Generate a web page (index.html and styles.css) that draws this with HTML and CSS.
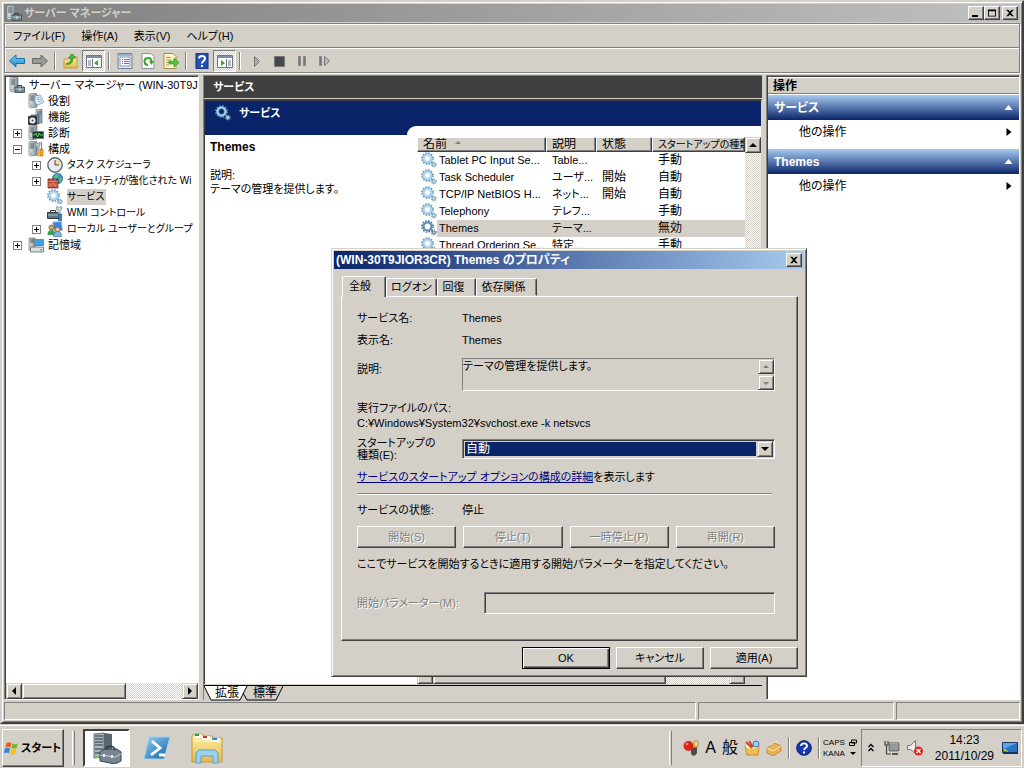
FILE: index.html
```html
<!DOCTYPE html>
<html lang="ja">
<head>
  <meta charset="UTF-8">
  <title>サーバー マネージャー</title>
  <link rel="stylesheet" href="styles.css">
</head>
<body>
  <!-- shared icons -->
  <svg class="sprite" aria-hidden="true">
    <defs>
      <linearGradient id="gTower" x1="0" x2="1"><stop offset="0" stop-color="#e4eaec"/><stop offset="1" stop-color="#7e8d94"/></linearGradient>
      <linearGradient id="gBlue" x1="0" y1="0" x2="0" y2="1"><stop offset="0" stop-color="#7fd3f7"/><stop offset="1" stop-color="#1583cf"/></linearGradient>
      <linearGradient id="gFolder" x1="0" y1="0" x2="0" y2="1"><stop offset="0" stop-color="#fff0a8"/><stop offset="1" stop-color="#e3b94c"/></linearGradient>
      <linearGradient id="gShell" x1="0" y1="0" x2="1" y2="1"><stop offset="0" stop-color="#8fd0f2"/><stop offset="1" stop-color="#0f5fa8"/></linearGradient>
      <symbol id="tower" viewBox="0 0 16 16">
        <path d="M1 1l6-1 2 1v13l-6 1-2-1z" fill="url(#gTower)" stroke="#6b7980" stroke-width=".7"/>
        <path d="M2 3h4M2 5h4M2 7h4" stroke="#4d5a61"/>
        <path d="M2 12h2v1H2z" fill="#4be01c"/>
      </symbol>
      <symbol id="server" viewBox="0 0 16 16">
        <use href="#tower"/>
        <path d="M6 10h9.500v5.500H6z" fill="#71848f" stroke="#3c4a53" stroke-width=".8"/>
        <path d="M8.500 10V8.500h4V10" fill="none" stroke="#333f48"/>
        <path d="M6.500 12h8.500" stroke="#b9c6ce"/><path d="M10 11.500h1.500v2H10z" fill="#e4eaee"/>
      </symbol>
      <symbol id="role" viewBox="0 0 16 16">
        <use href="#tower"/>
        <path d="M7 3l5-1 4 7-6 3-3-2z" fill="#e5f2fc" stroke="#6f93b5" stroke-width=".8"/>
        <path d="M8.500 5l3-1M9 7l4-1.500M10 9l4-1.500" stroke="#6d9cc9" stroke-width=".8"/>
      </symbol>
      <symbol id="feature" viewBox="0 0 16 16">
        <path d="M8 0h6v14H8z" fill="url(#gTower)" stroke="#6b7980" stroke-width=".7"/><path d="M9 3h4M9 5h4" stroke="#4d5a61"/>
        <path d="M3 6h8v9H3z" fill="#6c8aa3" stroke="#384d5e" stroke-width=".7"/>
        <path d="M.5 7.500h8v8h-8z" fill="#33393e" stroke="#16191b" stroke-width=".7"/>
        <circle cx="4.500" cy="11.500" r="3" fill="#e8edf0"/><circle cx="4.500" cy="11.500" r="1" fill="#444"/>
        <path d="M11 12h2v1h-2z" fill="#4be01c"/>
      </symbol>
      <symbol id="diag" viewBox="0 0 16 16">
        <use href="#tower"/>
        <path d="M4.500 6.500h11v7h-11z" fill="#183a26" stroke="#70777a"/>
        <path d="M5 10h2l1-2 1.500 4 1.500-4 1 2h3" fill="none" stroke="#5fe257" stroke-width=".9"/>
      </symbol>
      <symbol id="config" viewBox="0 0 16 16">
        <use href="#tower"/>
        <path d="M8 1l2 2 2-2v3l-1 2v9H9V6L7 4z" fill="#b7c2c9" stroke="#66747d" stroke-width=".6"/>
        <path d="M13.500 1v7" stroke="#7c8b95" stroke-width="1.200"/><path d="M12 8h3v7h-3z" fill="#f3a62c" stroke="#b36c0c" stroke-width=".6"/><path d="M9 10h2v5H9z" fill="#f3a62c"/>
      </symbol>
      <symbol id="clock" viewBox="0 0 16 16">
        <circle cx="8" cy="8" r="7.200" fill="#e9edf0" stroke="#5f6a70" stroke-width="1.400"/>
        <path d="M8 8V2.800A5.200 5.200 0 0 1 13.200 8z" fill="#f7d894"/>
        <path d="M8 3v5h4" fill="none" stroke="#4b4b4b"/>
      </symbol>
      <symbol id="firewall" viewBox="0 0 16 16">
        <circle cx="10.500" cy="5.500" r="5.200" fill="#2e8be0" stroke="#1a5ca0" stroke-width=".6"/>
        <path d="M8 2l3-1 1 2-2 2-2 1-1-2zM12 5l3 0-1 4-2-1z" fill="#5fc74d"/>
        <path d="M1 6h10v9H1z" fill="#b5402a" stroke="#6f1f12" stroke-width=".7"/>
        <path d="M1 8.500h10M1 11h10M1 13h10M4 6v2.500M8 6v2.500M6 8.500V11M4 11v2M8 11v2" stroke="#e9b3a2" stroke-width=".6"/>
      </symbol>
      <symbol id="gear" viewBox="0 0 16 16">
        <circle cx="6.500" cy="6.500" r="5.600" fill="none" stroke="#5f9ac2" stroke-width="1.600" stroke-dasharray="1.600 1.330"/>
        <circle cx="6.500" cy="6.500" r="4" fill="none" stroke="#b4daf0" stroke-width="2.200"/>
        <circle cx="6.500" cy="6.500" r="4.900" fill="none" stroke="#6fa5ca" stroke-width=".7"/>
        <circle cx="6.500" cy="6.500" r="2.800" fill="none" stroke="#8dbbd8" stroke-width=".5"/>
        <circle cx="12.800" cy="12.500" r="2.500" fill="none" stroke="#6d8ea6" stroke-width="1" stroke-dasharray="1 .960"/>
        <circle cx="12.800" cy="12.500" r="1.600" fill="#e4f0f7" stroke="#84a9c2" stroke-width="1.200"/>
      </symbol>
      <symbol id="gearSelected" viewBox="0 0 16 16">
        <circle cx="6.500" cy="6.500" r="5.600" fill="none" stroke="#37628c" stroke-width="1.400" stroke-dasharray="1.600 1.330"/>
        <circle cx="6.500" cy="6.500" r="4" fill="none" stroke="#5f8cb8" stroke-width="2.200"/>
        <circle cx="12.800" cy="12.500" r="2.500" fill="none" stroke="#3d6288" stroke-width="1" stroke-dasharray="1 .960"/>
        <circle cx="12.800" cy="12.500" r="1.500" fill="#d4d0c8" stroke="#587da3" stroke-width="1.100"/>
      </symbol>
      <symbol id="wmi" viewBox="0 0 16 16">
        <path d="M.5 7.500h12v6H.5z" fill="#617380" stroke="#2f3b43"/>
        <path d="M3.500 7V5.500h5V7" fill="none" stroke="#2f3b43"/><path d="M1 10h11" stroke="#a9b6be"/>
        <path d="M10 1l2 2 2-2 1 3-2 2v3h-2V6L9 4z" fill="#c6d0d6" stroke="#6a7881" stroke-width=".6"/>
        <path d="M11.500 9h3v6.500h-3z" fill="#377fc4" stroke="#1c4f86" stroke-width=".6"/>
      </symbol>
      <symbol id="users" viewBox="0 0 16 16">
        <path d="M5.500 1l9-.5 1 9-8 .5z" fill="#3f86dd" stroke="#b6c5d6"/>
        <circle cx="4.500" cy="6.500" r="2.500" fill="#dba567" stroke="#74481d" stroke-width=".7"/>
        <path d="M.5 14c0-4 2-5 4-5s3.500 1 4 5z" fill="#3da14c"/>
        <circle cx="10.500" cy="8.500" r="2.500" fill="#efc08b" stroke="#74481d" stroke-width=".7"/>
        <path d="M6.500 15.500c0-4 2-5 4-5s4 1 4 5z" fill="#7cb5e8" stroke="#2c5f94" stroke-width=".6"/>
      </symbol>
      <symbol id="storage" viewBox="0 0 16 16">
        <path d="M1 1h6v12H1z" fill="url(#gTower)" stroke="#6b7980" stroke-width=".7"/><path d="M2 3h4M2 5h4" stroke="#4d5a61"/>
        <path d="M6.500 2.500h9v6h-9z" fill="#3f9fe2" stroke="#6e8799"/>
        <path d="M2.500 10h13v5h-13z" fill="#d8dee1" stroke="#5c686e" stroke-width=".8"/><path d="M12 12h2v1.500h-2z" fill="#43d41c"/>
      </symbol>
      <symbol id="closeMark" viewBox="0 0 8 7"><path d="M0 0h2l2 2 2-2h2L5 3.500 8 7H6L4 5 2 7H0l3-3.500z"/></symbol>
    </defs>
  </svg>

  <main class="window">
    <header class="title-bar">
      <svg class="icon"><use href="#server"/></svg>
      <h1>サーバー マネージャー</h1>
      <button class="caption-button" aria-label="最小化"><svg viewBox="0 0 8 8"><path d="M0 6h6v2H0z"/></svg></button>
      <button class="caption-button" aria-label="最大化"><svg viewBox="0 0 9 8"><path d="M0 0h9v8H0zM1 2v5h7V2z" fill-rule="evenodd"/></svg></button>
      <button class="caption-button close" aria-label="閉じる"><svg viewBox="0 0 8 7"><use href="#closeMark"/></svg></button>
    </header>

    <div class="bars">
      <nav class="menu-bar">
        <button>ファイル(F)</button>
        <button>操作(A)</button>
        <button>表示(V)</button>
        <button>ヘルプ(H)</button>
      </nav>
      <div class="tool-bar">
        <button aria-label="戻る"><svg viewBox="0 0 16 16"><path d="M.5 8L7 2v3.500h8.500v5H7V14z" fill="url(#gBlue)" stroke="#1c6db0"/></svg></button>
        <button aria-label="進む"><svg viewBox="0 0 16 16"><path d="M15.500 8L9 2v3.500H.5v5H9V14z" fill="#999" stroke="#666"/></svg></button>
        <i></i>
        <button aria-label="上へ"><svg viewBox="0 0 16 16"><path d="M1 6h5l1-2h7v11H1z" fill="url(#gFolder)" stroke="#b88d2c" stroke-width=".8"/><path d="M3 11c4-1 5-3 5-6H5.500L9 .8 12.500 5H10c0 4-2 7-7 6z" fill="#40c92f" stroke="#1d7d17" stroke-width=".7"/></svg></button>
        <button class="pressed" aria-label="ツリー"><svg viewBox="0 0 16 16"><path d="M.5 2.500h15v12H.5z" fill="#fff" stroke="#68758a"/><path d="M1 3h14v2H1z" fill="#7990b0"/><path d="M2 8h3M2 10h3M2 12h3" stroke="#68758a"/><path d="M6.500 6v8" stroke="#68758a"/><path d="M8 10l4-3v6z" fill="#36ae25"/></svg></button>
        <i></i>
        <button aria-label="プロパティ"><svg viewBox="0 0 16 16"><path d="M1 .5h14v15H1z" fill="#e1e9f3" stroke="#6c8099"/><path d="M3 4h10v9H3z" fill="#fff" stroke="#8297b1"/><path d="M5 6.500h1M5 8.500h1M5 10.500h1M7 6.500h5M7 8.500h5M7 10.500h5M2 2h12" stroke="#527ba9"/></svg></button>
        <button aria-label="更新"><svg viewBox="0 0 16 16"><path d="M2 .5h9l3 3v12H2z" fill="#fff" stroke="#8b9297"/><path d="M11.500 8A3.500 3.500 0 1 0 8 12" fill="none" stroke="#38a52c" stroke-width="2"/><path d="M9 8h5l-2.500 4z" fill="#38a52c"/></svg></button>
        <button aria-label="一覧のエクスポート"><svg viewBox="0 0 16 16"><path d="M1 .5h9l3 3v12H1z" fill="#fff6c6" stroke="#a4904c"/><path d="M3 4.500h5M3 7h5M3 9.500h3M3 12h3" stroke="#9d976e"/><path d="M6 8h5V5l5 4.500-5 4.500v-3H6z" fill="#54c63b" stroke="#2d8321" stroke-width=".6"/></svg></button>
        <i></i>
        <button aria-label="ヘルプ"><svg viewBox="0 0 16 16"><path d="M2 0h12v16H2z" fill="#234fba" stroke="#122c72"/><path d="M5 5.500C5 2 11 2 11 5.500 11 8 8 8 8 10.500" fill="none" stroke="#fff" stroke-width="2"/><path d="M7 12h2v2H7z" fill="#fff"/></svg></button>
        <button class="pressed" aria-label="操作ウィンドウ"><svg viewBox="0 0 16 16"><path d="M.5 2.500h15v12H.5z" fill="#fff" stroke="#68758a"/><path d="M1 3h14v2H1z" fill="#7990b0"/><path d="M11 8h3M11 10h3M11 12h3" stroke="#68758a"/><path d="M9.500 6v8" stroke="#68758a"/><path d="M4 7l4 3-4 3z" fill="#36ae25"/></svg></button>
        <i></i>
        <button aria-label="開始"><svg viewBox="0 0 16 16"><path d="M6.500 3.500l5 5-5 5z" fill="#aaa" stroke="#777"/></svg></button>
        <button aria-label="停止"><svg viewBox="0 0 16 16"><path d="M3.500 3.500h10v10h-10z" fill="#484848" stroke="#777"/></svg></button>
        <button aria-label="一時停止"><svg viewBox="0 0 16 16"><path d="M4.500 3.500h2v9h-2zM9.500 3.500h2v9h-2z" fill="#777" stroke="#888"/></svg></button>
        <button aria-label="再起動"><svg viewBox="0 0 16 16"><path d="M2.500 3.500h2v9h-2z" fill="#777" stroke="#888"/><path d="M7.500 3.500l5 4.500-5 4.500z" fill="#bbb" stroke="#777"/></svg></button>
      </div>
    </div>

    <div class="workspace">
      <section class="tree-pane sunken">
        <ul class="tree">
          <li class="root"><svg class="icon"><use href="#server"/></svg><span>サーバー マネージャー (WIN-30T9J</span></li>
          <li><b></b><svg class="icon"><use href="#role"/></svg><span>役割</span></li>
          <li><b></b><svg class="icon"><use href="#feature"/></svg><span>機能</span></li>
          <li><b class="plus"></b><svg class="icon"><use href="#diag"/></svg><span>診断</span></li>
          <li><b class="minus"></b><svg class="icon"><use href="#config"/></svg><span>構成</span></li>
          <li class="child"><b class="plus"></b><svg class="icon"><use href="#clock"/></svg><span>タスク スケジューラ</span></li>
          <li class="child"><b class="plus"></b><svg class="icon"><use href="#firewall"/></svg><span>セキュリティが強化された Wi</span></li>
          <li class="child"><b></b><svg class="icon"><use href="#gear"/></svg><span class="current">サービス</span></li>
          <li class="child"><b></b><svg class="icon"><use href="#wmi"/></svg><span>WMI コントロール</span></li>
          <li class="child"><b class="plus"></b><svg class="icon"><use href="#users"/></svg><span>ローカル ユーザーとグループ</span></li>
          <li><b class="plus"></b><svg class="icon"><use href="#storage"/></svg><span>記憶域</span></li>
        </ul>
        <div class="scroll-bar">
          <button aria-label="左へ"><svg viewBox="0 0 8 8"><path d="M6 0v8L2 4z"/></svg></button>
          <div class="thumb tree-thumb"></div>
          <div class="track"></div>
          <button aria-label="右へ"><svg viewBox="0 0 8 8"><path d="M2 0v8l4-4z"/></svg></button>
        </div>
      </section>

      <section class="center-pane">
        <h2 class="dark-head">サービス</h2>
        <div class="service-view">
          <div class="blue-head"><svg class="icon"><use href="#gear"/></svg><h3>サービス</h3></div>
          <div class="service-body">
            <div class="summary">
              <h4>Themes</h4>
              <p>説明:<br>テーマの管理を提供します。</p>
            </div>
            <div class="list-panel">
              <div class="list-row">
                <div class="list-clip">
                  <table class="services">
                    <colgroup><col class="c-name"><col class="c-desc"><col class="c-state"><col></colgroup>
                    <thead><tr><th>名前 <svg class="sort" viewBox="0 0 6 3"><path d="M3 0l3 3H0z"/></svg></th><th>説明</th><th>状態</th><th class="startup-head">スタートアップの種類</th></tr></thead>
                    <tbody>
                      <tr><td><svg class="icon"><use href="#gear"/></svg><span>Tablet PC Input Se...</span></td><td>Table...</td><td></td><td>手動</td></tr>
                      <tr><td><svg class="icon"><use href="#gear"/></svg><span>Task Scheduler</span></td><td>ユーザ...</td><td>開始</td><td>自動</td></tr>
                      <tr><td><svg class="icon"><use href="#gear"/></svg><span>TCP/IP NetBIOS H...</span></td><td>ネット...</td><td>開始</td><td>自動</td></tr>
                      <tr><td><svg class="icon"><use href="#gear"/></svg><span>Telephony</span></td><td>テレフ...</td><td></td><td>手動</td></tr>
                      <tr class="selected"><td><svg class="icon"><use href="#gearSelected"/></svg><span>Themes</span></td><td>テーマ...</td><td></td><td>無効</td></tr>
                      <tr><td><svg class="icon"><use href="#gear"/></svg><span>Thread Ordering Se...</span></td><td>特定...</td><td></td><td>手動</td></tr>
                    </tbody>
                  </table>
                </div>
                <div class="scroll-bar vertical">
                  <button aria-label="上へスクロール"><svg viewBox="0 0 8 8"><path d="M4 2l4 4H0z"/></svg></button>
                  <div class="track"></div>
                </div>
              </div>
              <div class="list-foot">
                <div class="scroll-bar">
                  <button aria-label="左へスクロール"></button>
                  <div class="thumb list-thumb"></div>
                  <div class="track"></div>
                  <button aria-label="右へスクロール"></button>
                </div>
              </div>
            </div>
          </div>
        </div>
        <div class="view-tabs">
          <button class="active"><svg viewBox="0 0 46 15" preserveAspectRatio="none"><path d="M0 0l7 14h29l7-14z" fill="#fff"/><path d="M0 0l7 14h29l7-14" fill="none" stroke="#000"/></svg><span>拡張</span></button>
          <button><svg viewBox="0 0 46 15" preserveAspectRatio="none"><path d="M1 7l4 7h29l7-14" fill="none" stroke="#000"/></svg><span>標準</span></button>
        </div>
      </section>

      <aside class="action-pane sunken">
        <h2>操作</h2>
        <h3>サービス <svg viewBox="0 0 8 5"><path d="M4 0l4 5H0z" fill="#fff"/></svg></h3>
        <button>他の操作 <svg viewBox="0 0 5 8"><path d="M0 0l5 4-5 4z"/></svg></button>
        <h3>Themes <svg viewBox="0 0 8 5"><path d="M4 0l4 5H0z" fill="#fff"/></svg></h3>
        <button>他の操作 <svg viewBox="0 0 5 8"><path d="M0 0l5 4-5 4z"/></svg></button>
      </aside>
    </div>

    <footer class="status-bar"><div></div><div></div><div></div></footer>
  </main>

  <section class="dialog" role="dialog" aria-labelledby="dialogTitle">
    <header class="dialog-title">
      <h2 id="dialogTitle">(WIN-30T9JIOR3CR) Themes のプロパティ</h2>
      <button class="caption-button" aria-label="閉じる"><svg viewBox="0 0 8 7"><use href="#closeMark"/></svg></button>
    </header>
    <div class="tabs">
      <button class="active">全般</button>
      <button>ログオン</button>
      <button>回復</button>
      <button>依存関係</button>
    </div>
    <form class="tab-page">
      <div class="field"><span>サービス名:</span><span>Themes</span></div>
      <div class="field"><span>表示名:</span><span>Themes</span></div>
      <div class="field description">
        <label for="desc">説明:</label>
        <div class="desc-box">
          <textarea id="desc" readonly>テーマの管理を提供します。</textarea>
          <div class="spinner">
            <button type="button" aria-label="上"><svg viewBox="0 0 8 8"><path d="M4 2l3 3H1z"/></svg></button>
            <button type="button" aria-label="下"><svg viewBox="0 0 8 8"><path d="M1 3h6L4 6z"/></svg></button>
          </div>
        </div>
      </div>
      <p class="path">実行ファイルのパス:<br>C:¥Windows¥System32¥svchost.exe -k netsvcs</p>
      <div class="field startup">
        <label for="startup">スタートアップの<br>種類(E):</label>
        <div class="select-box">
          <select id="startup"><option>自動</option></select>
          <span class="drop"><svg viewBox="0 0 8 8"><path d="M0 2h8L4 6z"/></svg></span>
        </div>
      </div>
      <p class="link-line"><a href="#">サービスのスタートアップ オプションの構成の詳細</a>を表示します</p>
      <hr>
      <div class="field"><span>サービスの状態:</span><span>停止</span></div>
      <div class="controls">
        <button type="button" disabled>開始(S)</button>
        <button type="button" disabled>停止(T)</button>
        <button type="button" disabled>一時停止(P)</button>
        <button type="button" disabled>再開(R)</button>
      </div>
      <p class="hint">ここでサービスを開始するときに適用する開始パラメーターを指定してください。</p>
      <div class="field params">
        <label for="params">開始パラメーター(M):</label>
        <input id="params" type="text" disabled>
      </div>
    </form>
    <div class="dialog-buttons">
      <button class="default">OK</button>
      <button>キャンセル</button>
      <button>適用(A)</button>
    </div>
  </section>

  <footer class="task-bar">
    <button class="start">
      <svg viewBox="0 0 16 16"><path d="M2.500 3c2-1.300 3.500-1 5 0L6.300 7.600c-1.500-1-3-1-5 0z" fill="#ee5a24"/><path d="M8.500 3.500c2 1 3.500 1 5.500 0l-1.200 4.600c-2 1-3.500 1-5.500 0z" fill="#79b928"/><path d="M1 8.600c2-1.200 3.500-1 5 0l-1.200 4.600c-1.500-1-3-1-5 0z" fill="#2f82d6"/><path d="M7 9.100c2 1 3.500 1 5.500 0l-1.200 4.600c-2 1-3.500 1-5.500 0z" fill="#fbbf1d"/></svg>
      <span>スタート</span>
    </button>
    <i class="grip"></i>
    <button class="task running" aria-label="サーバー マネージャー">
      <svg viewBox="0 0 32 32">
        <path d="M3 2l10-1v24l-10 1z" fill="#a9b5bb" stroke="#6b7980"/><path d="M13 1l8 1v22l-8 1z" fill="#59666e"/>
        <path d="M4 4h8M4 7h8M4 10h8M4 13h8M4 17h8M4 21h8" stroke="#55626a" stroke-width="1.500"/><path d="M4 24h3v2H4z" fill="#4be01c"/>
        <path d="M9 20l4-3h13l4 3v9l-6 3-15-3z" fill="#76858f" stroke="#37444c"/><path d="M15 18c0-5 8-5 9 0" fill="none" stroke="#2e383e" stroke-width="1.500"/>
        <path d="M9 23l15 2 6-3" fill="none" stroke="#ccd5da"/><path d="M12 22h2v3h-2zM20 23h2v3h-2z" fill="#e7edf0"/>
      </svg>
    </button>
    <button class="task" aria-label="PowerShell">
      <svg viewBox="0 0 32 32"><path d="M8 5h21l-6 22H3z" fill="url(#gShell)" stroke="#a5d3ee"/><path d="M11 9l8 7-9 7M18 23h6" fill="none" stroke="#fff" stroke-width="2.800"/></svg>
    </button>
    <button class="task" aria-label="エクスプローラー">
      <svg viewBox="0 0 32 32"><path d="M1 4l2-2h8l2 2h8l1 2h9v24H1z" fill="url(#gFolder)" stroke="#c69a39"/><path d="M4 2h6v4H4z" fill="#fff"/><path d="M4 2h4v2H4z" fill="#2aa22c"/><path d="M11 4h8v4h-8z" fill="#fff"/><path d="M12 4h4v2h-4z" fill="#d5331f"/><path d="M20 6h9v4h-9z" fill="#fff"/><path d="M21 6h5v2h-5z" fill="#2b8de0"/><path d="M2 9h28" stroke="#fff7cf"/><path d="M5 31V21l3-3h16l3 3v10h-5v-7H10v7z" fill="#9bd2ef" stroke="#5a9fc8"/></svg>
    </button>

    <div class="ime">
      <i class="grip"></i>
      <svg class="ime-icon" viewBox="0 0 16 16"><path d="M8 8l6-1v6c-2 4-6 3-6 0z" fill="#4b4b4b"/><path d="M11 1h4v6h-4z" fill="#f5d36a" stroke="#a1701c" stroke-width=".6"/><circle cx="5.500" cy="6" r="5" fill="#e02317"/><circle cx="4" cy="4" r="1.300" fill="#ff8a80"/></svg>
      <span class="mode">A</span>
      <span class="mode">般</span>
      <svg class="ime-icon" viewBox="0 0 16 16"><path d="M1 6h14l-1 9H3z" fill="#f0bd51" stroke="#b3741c" stroke-width=".7"/><ellipse cx="8" cy="6.500" rx="6.500" ry="2" fill="#fff3cf"/><path d="M2 2l6 6M5 1l4 6" stroke="#d9402c" stroke-width="2"/><circle cx="12" cy="4" r="3" fill="#9fd0f5" stroke="#376fb0"/></svg>
      <svg class="ime-icon" viewBox="0 0 16 16"><path d="M1 8l8-5 6 3v5l-8 5-6-3z" fill="#eab152" stroke="#a9762b" stroke-width=".7"/><path d="M1 8l6 3 8-5M6 5c0-4 6-4 6-1" fill="none" stroke="#fff0ba"/></svg>
      <i class="line"></i>
      <svg class="ime-icon" viewBox="0 0 16 16"><circle cx="8" cy="8" r="7.300" fill="#1538b4" stroke="#0a1d63"/><path d="M5 6c0-3.500 6-3.500 6 0 0 2-3 2-3 4" fill="none" stroke="#fff" stroke-width="1.800"/><path d="M7 11.500h2v2H7z" fill="#fff"/></svg>
      <i class="line"></i>
      <div class="locks"><span>CAPS</span><span>KANA</span></div>
      <div class="ime-menu">
        <svg viewBox="0 0 8 7"><path d="M2.500 1h5v3h-5zM.5 3.500h5v3h-5z" fill="#d4d0c8" stroke="#000"/></svg>
        <svg viewBox="0 0 8 7"><path d="M1 2h6L4 5z"/></svg>
      </div>
    </div>
    <div class="tray">
      <svg class="chevrons" viewBox="0 0 6 8"><path d="M.5 3.500L3 1l2.500 2.500M.5 7.500L3 5l2.500 2.500" fill="none" stroke="#000" stroke-width="1.300"/></svg>
      <svg class="ime-icon" viewBox="0 0 16 16"><path d="M4.500 3.500h11v8h-11z" fill="#999" stroke="#fff"/><path d="M5 3h10v8H5z" fill="none" stroke="#555"/><path d="M8 14h6" stroke="#555" stroke-width="2"/><path d="M1 1v4h3V1M2.500 5v9H7" fill="none" stroke="#444" stroke-width="1.200"/></svg>
      <svg class="ime-icon" viewBox="0 0 16 16"><path d="M.5 5.500h3l5-5v13l-5-4h-3z" fill="#eee" stroke="#777"/><circle cx="11.500" cy="11" r="4.500" fill="#d9281d"/><path d="M9.500 9l4 4M13.500 9l-4 4" stroke="#fff" stroke-width="1.400"/></svg>
      <time>14:23<br>2011/10/29</time>
      <svg class="ime-icon" viewBox="0 0 16 16"><path d="M.5 2.500h15v10H.5z" fill="#2a73c4" stroke="#173a6b"/><path d="M1 3h14L1 9z" fill="#5ea4e6"/><path d="M1 12h15v2H1z" fill="#12335e"/><path d="M2 9h2v2H2z" fill="#f5bf24"/><path d="M4 10h2v2H4z" fill="#62bd2d"/></svg>
    </div>
  </footer>
</body>
</html>
```
FILE: styles.css
```css
* {
  box-sizing: border-box;
}
body {
  margin: 0;
  height: 100vh;
  display: flex;
  flex-direction: column;
  overflow: hidden;
  background: #d4d0c8;
  color: #000;
  font: 11px/16px "Liberation Sans", "Noto Sans CJK JP", sans-serif;
  font-feature-settings: "palt";
  white-space: nowrap;
}
h1, h2, h3, h4, p, ul {
  margin: 0;
  padding: 0;
}
h1, h2, h4 {
  font-size: 12px;
}
h3, p {
  font-size: 11px;
}
button, input, select, textarea {
  margin: 0;
  padding: 0;
  border: 0;
  border-radius: 0;
  background: none;
  color: inherit;
  font: inherit;
  font-feature-settings: inherit;
}
svg {
  flex: none;
}
.sprite {
  position: absolute;
  width: 0;
  height: 0;
}
.icon {
  width: 16px;
  height: 16px;
}

/* main window */
.window {
  flex: 1;
  min-height: 0;
  display: flex;
  flex-direction: column;
  padding: 2px;
  border: 2px solid;
  border-color: #d4d0c8 #404040 #404040 #d4d0c8;
  box-shadow: inset 1px 1px #fff, inset -1px -1px #808080;
}
.title-bar {
  height: 18px;
  display: flex;
  align-items: center;
  padding: 0 2px;
  background: linear-gradient(90deg, #808080, #c0c0c0);
  color: #d4d0c8;
}
.title-bar h1 {
  flex: 1;
  padding-left: 2px;
  font-size: 11px;
}
.caption-button {
  display: flex;
  align-items: center;
  justify-content: center;
  width: 16px;
  height: 14px;
  background: #d4d0c8;
  border: 1px solid;
  border-color: #fff #404040 #404040 #fff;
  box-shadow: inset -1px -1px #808080;
}
.caption-button svg {
  width: 8px;
  height: 8px;
}
.caption-button.close {
  margin-left: 2px;
}
.bars {
  margin-top: 1px;
  border: 1px solid #808080;
  box-shadow: 1px 1px #fff, inset 1px 1px #fff;
}
.menu-bar {
  display: flex;
  align-items: center;
  gap: 16px;
  height: 24px;
  padding-left: 8px;
  border-bottom: 1px solid #808080;
}
.tool-bar {
  display: flex;
  align-items: center;
  height: 24px;
  border-top: 1px solid #fff;
}
.tool-bar button {
  display: flex;
  align-items: center;
  justify-content: center;
  width: 23px;
  height: 22px;
}
.tool-bar button.pressed {
  border: 1px solid;
  border-color: #808080 #fff #fff #808080;
  background: repeating-conic-gradient(#fff 0 25%, #d4d0c8 0 50%) 0 0 / 2px 2px;
}
.tool-bar svg {
  width: 16px;
  height: 16px;
}
.tool-bar i, .ime .line {
  width: 2px;
  height: 18px;
  margin: 0 3px;
  border-left: 1px solid #808080;
  border-right: 1px solid #fff;
}

/* three panes */
.workspace {
  flex: 1;
  min-height: 0;
  display: flex;
  gap: 4px;
  padding: 2px 0;
}
.sunken {
  border: 1px solid;
  border-color: #808080 #fff #fff #808080;
  box-shadow: inset 1px 1px #404040;
  background: #fff;
}
.tree-pane {
  flex: 0 0 195px;
  display: flex;
  flex-direction: column;
  overflow: hidden;
  padding: 1px 0 0 1px;
}
.tree {
  flex: 1;
  list-style: none;
  overflow: hidden;
}
.tree li {
  display: flex;
  align-items: center;
  gap: 4px;
  height: 16px;
  padding-left: 7px;
}
.tree li.root {
  padding-left: 3px;
}
.tree li.child {
  padding-left: 26px;
  font-size: 10px;
}
.tree b {
  flex: none;
  width: 9px;
  height: 9px;
  margin-right: 2px;
}
.tree .plus, .tree .minus {
  border: 1px solid #808080;
  background: linear-gradient(#000, #000) center / 5px 1px no-repeat;
}
.tree .plus {
  background: linear-gradient(#000, #000) center / 5px 1px no-repeat, linear-gradient(#000, #000) center / 1px 5px no-repeat;
}
.tree .current {
  background: #d4d0c8;
  padding-right: 2px;
}
.scroll-bar {
  display: flex;
  height: 16px;
}
.scroll-bar button, .thumb, .spinner button, .drop {
  display: flex;
  align-items: center;
  justify-content: center;
  flex: none;
  background: #d4d0c8;
  border: 1px solid;
  border-color: #d4d0c8 #404040 #404040 #d4d0c8;
  box-shadow: inset 1px 1px #fff, inset -1px -1px #808080;
}
.scroll-bar button {
  width: 16px;
  height: 16px;
}
.scroll-bar svg, .spinner svg, .drop svg {
  width: 8px;
  height: 8px;
}
.track {
  flex: 1;
  background: repeating-conic-gradient(#fff 0 25%, #d4d0c8 0 50%) 0 0 / 2px 2px;
}
.tree-thumb {
  width: 54%;
}
.list-thumb {
  width: 71%;
}
.scroll-bar.vertical {
  flex-direction: column;
  width: 16px;
  height: auto;
}

.center-pane {
  flex: 1;
  min-width: 0;
  display: flex;
  flex-direction: column;
  border: solid #808080;
  border-width: 1px 0 0 1px;
}
.dark-head {
  height: 22px;
  padding-left: 9px;
  background: #404040;
  color: #fff;
  font-size: 11px;
  line-height: 22px;
}
.service-view {
  flex: 1;
  min-height: 0;
  display: flex;
  flex-direction: column;
  margin-top: 1px;
  border: solid #404040;
  border-width: 2px 0 0 1px;
  border-right: 1px solid #d4d0c8;
  background: #fff;
}
.blue-head {
  display: flex;
  gap: 8px;
  height: 34px;
  padding: 4px 10px;
  background: #0a246a;
  color: #fff;
}
.service-body {
  flex: 1;
  min-height: 0;
  display: flex;
}
.summary {
  flex: 0 0 202px;
  padding: 4px 5px;
}
.summary p {
  padding-top: 13px;
  line-height: 14px;
}
.list-panel {
  flex: 1;
  min-width: 0;
  display: flex;
  flex-direction: column;
  margin-top: -9px;
  padding: 11px 0 0 10px;
  border-top-left-radius: 9px;
  background: #fff;
}
.list-row {
  flex: 1;
  min-height: 0;
  display: flex;
}
.list-clip {
  flex: 1;
  min-width: 0;
  overflow: hidden;
}
.services {
  width: 100%;
  table-layout: fixed;
  border-collapse: separate;
  border-spacing: 0;
  font-size: 12px;
}
.c-name {
  width: 129px;
}
.c-desc {
  width: 50px;
}
.c-state {
  width: 56px;
}
.services th {
  height: 15px;
  padding: 0 0 0 5px;
  overflow: hidden;
  background: #d4d0c8;
  border: 1px solid;
  border-color: #fff #404040 #404040 #fff;
  box-shadow: inset -1px -1px #808080;
  font-weight: normal;
  line-height: 13px;
  text-align: left;
}
.services .startup-head {
  font-size: 10px;
}
.services td {
  height: 17px;
  padding: 0 0 0 6px;
  line-height: 17px;
  overflow: hidden;
}
.services td:first-child {
  display: flex;
  padding-left: 4px;
}
.services td:first-child, .services td:nth-child(2) {
  font-size: 11px;
}
.services td span {
  flex: 1;
  padding-left: 2px;
}
.services .selected td:first-child span, .services .selected td + td {
  background: #d4d0c8;
}
.sort {
  width: 6px;
  height: 3px;
  margin: 0 0 4px 5px;
  fill: #808080;
}
.list-foot {
  padding-right: 16px;
  background: #d4d0c8;
}
.view-tabs {
  display: flex;
  height: 15px;
  margin-top: 1px;
  border-top: 1px solid #000;
  font-size: 12px;
}
.view-tabs button {
  display: grid;
  width: 38px;
}
.view-tabs svg, .view-tabs span {
  grid-area: 1 / 1;
}
.view-tabs svg {
  width: 46px;
  height: 15px;
}
.view-tabs span {
  line-height: 14px;
}

.action-pane {
  flex: 0 0 254px;
  padding: 2px 0 0 1px;
}
.action-pane h2 {
  height: 16px;
  margin-bottom: 1px;
  padding-left: 5px;
  background: #d4d0c8;
  border-bottom: 1px solid #808080;
}
.action-pane h3 {
  display: flex;
  align-items: center;
  justify-content: space-between;
  height: 25px;
  padding: 0 6px;
  background: linear-gradient(#a6caf0, #0a246a);
  color: #fff;
  font-size: 12px;
}
.action-pane h3 svg {
  width: 9px;
  height: 5px;
}
.action-pane button {
  display: flex;
  align-items: center;
  justify-content: space-between;
  width: 100%;
  height: 24px;
  margin-bottom: 5px;
  padding: 0 7px 0 31px;
  font-size: 12px;
}
.action-pane button svg {
  width: 6px;
  height: 8px;
}

.status-bar {
  display: flex;
  gap: 2px;
  height: 18px;
}
.status-bar div {
  flex: 0 0 196px;
  border: 1px solid;
  border-color: #808080 #fff #fff #808080;
}
.status-bar div:first-child {
  flex: 1;
}
.status-bar div:last-child {
  flex-basis: 124px;
}

/* properties dialog, floats over the desktop */
.dialog {
  position: absolute;
  left: 331px;
  top: 248px;
  width: 476px;
  padding: 2px;
  background: #d4d0c8;
  border: 1px solid;
  border-color: #d4d0c8 #404040 #404040 #d4d0c8;
  box-shadow: inset 1px 1px #fff, inset -1px -1px #808080;
}
.dialog-title {
  display: flex;
  align-items: center;
  justify-content: space-between;
  height: 18px;
  padding: 0 2px;
  background: linear-gradient(90deg, #0a246a, #a6caf0);
  color: #fff;
}
.tabs {
  display: flex;
  align-items: flex-end;
  padding: 7px 8px 0;
}
.tabs button {
  height: 18px;
  padding: 0 4px;
  border: 1px solid;
  border-color: #fff #404040 transparent #fff;
  border-radius: 2px 2px 0 0;
  box-shadow: inset -1px 0 #808080;
}
.tabs button:nth-child(n+3) {
  padding: 0 10px 0 5px;
}
.tabs button.active {
  height: 21px;
  margin-bottom: -1px;
  padding: 0 14px 3px 6px;
  background: #d4d0c8;
  border-bottom: 0;
}
.tab-page {
  margin: 0 6px 0 7px;
  padding: 13px 22px 26px 15px;
  border: 1px solid;
  border-color: #fff #404040 #404040 #fff;
  box-shadow: inset -1px -1px #808080;
}
.field {
  display: grid;
  grid-template-columns: 105px 1fr;
  align-items: center;
  margin-bottom: 6px;
}
.field.description {
  margin-top: 10px;
  align-items: start;
}
.description label {
  padding-top: 3px;
}
.desc-box {
  display: flex;
  height: 33px;
  border: 1px solid;
  border-color: #808080 #fff #fff #808080;
}
.desc-box textarea {
  flex: 1;
  min-width: 0;
  resize: none;
  outline: 0;
  overflow: hidden;
  line-height: 14px;
}
.spinner {
  display: flex;
  flex-direction: column;
  justify-content: space-between;
}
.spinner button {
  width: 16px;
  height: 15px;
}
.spinner path {
  fill: #808080;
}
.path {
  padding-top: 4px;
  line-height: 15px;
}
.field.startup {
  margin: 6px 0 8px;
  line-height: 12px;
}
.select-box {
  display: flex;
  height: 20px;
  padding: 1px;
  border: 1px solid;
  border-color: #808080 #fff #fff #808080;
  box-shadow: inset 1px 1px #404040;
}
.select-box select {
  flex: 1;
  appearance: none;
  margin: 1px;
  padding-left: 1px;
  background: #0a246a;
  color: #fff;
  font-size: 12px;
  line-height: 14px;
}
.drop {
  width: 16px;
}
.link-line a {
  color: #000080;
}
hr {
  height: 2px;
  margin: 8px 3px 7px 0;
  border: 0;
  border-top: 1px solid #808080;
  border-bottom: 1px solid #fff;
}
.controls {
  display: flex;
  gap: 7px;
  padding-top: 2px;
}
.controls button, .dialog-buttons button {
  flex: 1;
  height: 22px;
  border: 1px solid;
  border-color: #fff #404040 #404040 #fff;
  box-shadow: inset -1px -1px #808080;
}
.controls button:disabled, .params label {
  color: #808080;
  text-shadow: 1px 1px #fff;
}
.hint {
  padding: 8px 0 20px;
}
.field.params {
  grid-template-columns: 127px 1fr;
  margin: 0;
}
.params input {
  width: 100%;
  height: 22px;
  border: 1px solid;
  border-color: #808080 #fff #fff #808080;
  box-shadow: inset 1px 1px #404040;
}
.dialog-buttons {
  display: flex;
  justify-content: flex-end;
  gap: 6px;
  padding: 6px 6px 5px;
}
.dialog-buttons button {
  flex: 0 0 88px;
}
.dialog-buttons .default {
  border-color: #000;
  box-shadow: inset 1px 1px #fff, inset -1px -1px #404040, inset -2px -2px #808080;
}

/* task bar */
.task-bar {
  display: flex;
  align-items: center;
  height: 44px;
  padding: 2px 2px 0;
  border-top: 1px solid #d4d0c8;
  box-shadow: inset 0 1px #fff;
}
.start {
  display: flex;
  align-items: center;
  gap: 1px;
  width: 62px;
  height: 38px;
  padding-left: 1px;
  border: 1px solid;
  border-color: #fff #404040 #404040 #fff;
  box-shadow: inset -1px -1px #808080;
  font-weight: bold;
}
.start svg {
  width: 16px;
  height: 16px;
}
.grip {
  width: 3px;
  height: 34px;
  margin: 0 8px;
  border-left: 1px solid #fff;
  border-right: 1px solid #808080;
}
.task {
  display: flex;
  align-items: center;
  justify-content: center;
  width: 47px;
  height: 38px;
  margin-right: 3px;
}
.task svg {
  width: 32px;
  height: 32px;
}
.task.running {
  border: 2px solid;
  border-color: #404040 #fff #fff #404040;
  background: #fff;
}
.ime {
  display: flex;
  align-items: center;
  margin-left: auto;
}
.ime-icon {
  width: 16px;
  height: 16px;
  margin: 0 3px;
}
.mode {
  padding: 0 3px;
  font-size: 16px;
}
.ime .line {
  height: 22px;
}
.locks {
  display: flex;
  flex-direction: column;
  font-size: 8px;
  line-height: 11px;
}
.ime-menu {
  display: flex;
  flex-direction: column;
  gap: 4px;
  margin: 0 4px;
}
.ime-menu svg {
  width: 8px;
  height: 7px;
}
.tray {
  display: flex;
  align-items: center;
  height: 38px;
  padding-left: 6px;
  border: 1px solid;
  border-color: #808080 #fff #fff #808080;
}
.tray .ime-icon {
  margin-left: 4px;
}
.chevrons {
  width: 6px;
  height: 9px;
  margin-right: 6px;
}
.tray time {
  padding: 0 4px 0 9px;
  font-size: 12px;
  text-align: center;
}
```
